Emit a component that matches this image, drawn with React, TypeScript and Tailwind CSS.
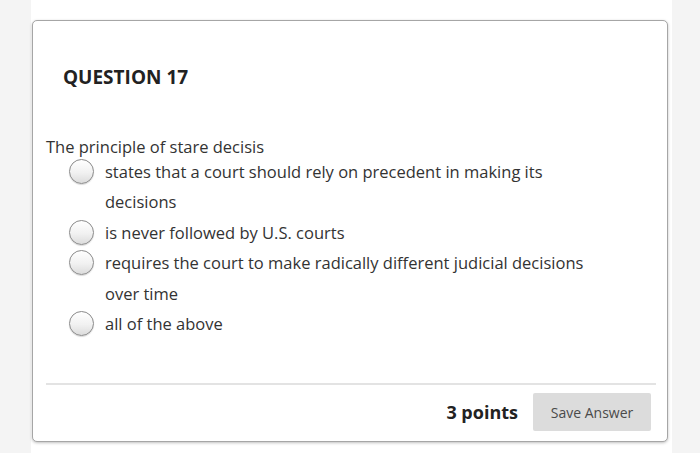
import React from "react"

const options = [
  "states that a court should rely on precedent in making its decisions",
  "is never followed by U.S. courts",
  "requires the court to make radically different judicial decisions over time",
  "all of the above",
]

function Radio() {
  return (
    <span className="mt-[2px] block h-[25px] w-[25px] shrink-0 rounded-full border border-[#8a8a8a] bg-[linear-gradient(180deg,#ffffff_0%,#f1f1f1_55%,#dcdcdc_100%)] shadow-[0_1px_1px_rgba(0,0,0,0.15)]" />
  )
}

export default function App() {
  return (
    <div className="flex h-[453px] w-full bg-[#f4f4f4] font-['Open_Sans',sans-serif] text-[#333]">
      <div className="ml-[31px] h-full w-[641px] bg-white pt-[20px]">
        <div className="ml-[1px] flex h-[422px] w-[636px] flex-col overflow-hidden rounded-[5px] border border-[#a6a6a6] bg-white shadow-[0_1px_3px_rgba(0,0,0,0.25)]">
          <h2 className="ml-[30px] mt-[43px] text-[19px] font-bold leading-[27px] text-[#222]">
            QUESTION 17
          </h2>

          <p className="ml-[13px] mt-[46px] text-[16.5px] leading-[20px]">
            The principle of stare decisis
          </p>

          <div className="ml-[36px] flex flex-col">
            {options.map((text) => (
              <label key={text} className="flex gap-[11px]">
                <Radio />
                <span className="w-[495px] text-[16.5px] leading-[30.4px]">{text}</span>
              </label>
            ))}
          </div>

          <div className="ml-[13px] mr-[11px] mt-auto border-t-2 border-[#e3e3e3]" />

          <div className="mb-[10px] mr-[16px] mt-[8px] flex items-center justify-end gap-[15px]">
            <span className="text-[18px] font-bold text-[#222]">3 points</span>
            <button className="h-[38px] w-[118px] rounded-[2px] bg-[#dcdcdc] text-[14px] text-[#4a4a4a]">
              Save Answer
            </button>
          </div>
        </div>
      </div>
    </div>
  )
}
